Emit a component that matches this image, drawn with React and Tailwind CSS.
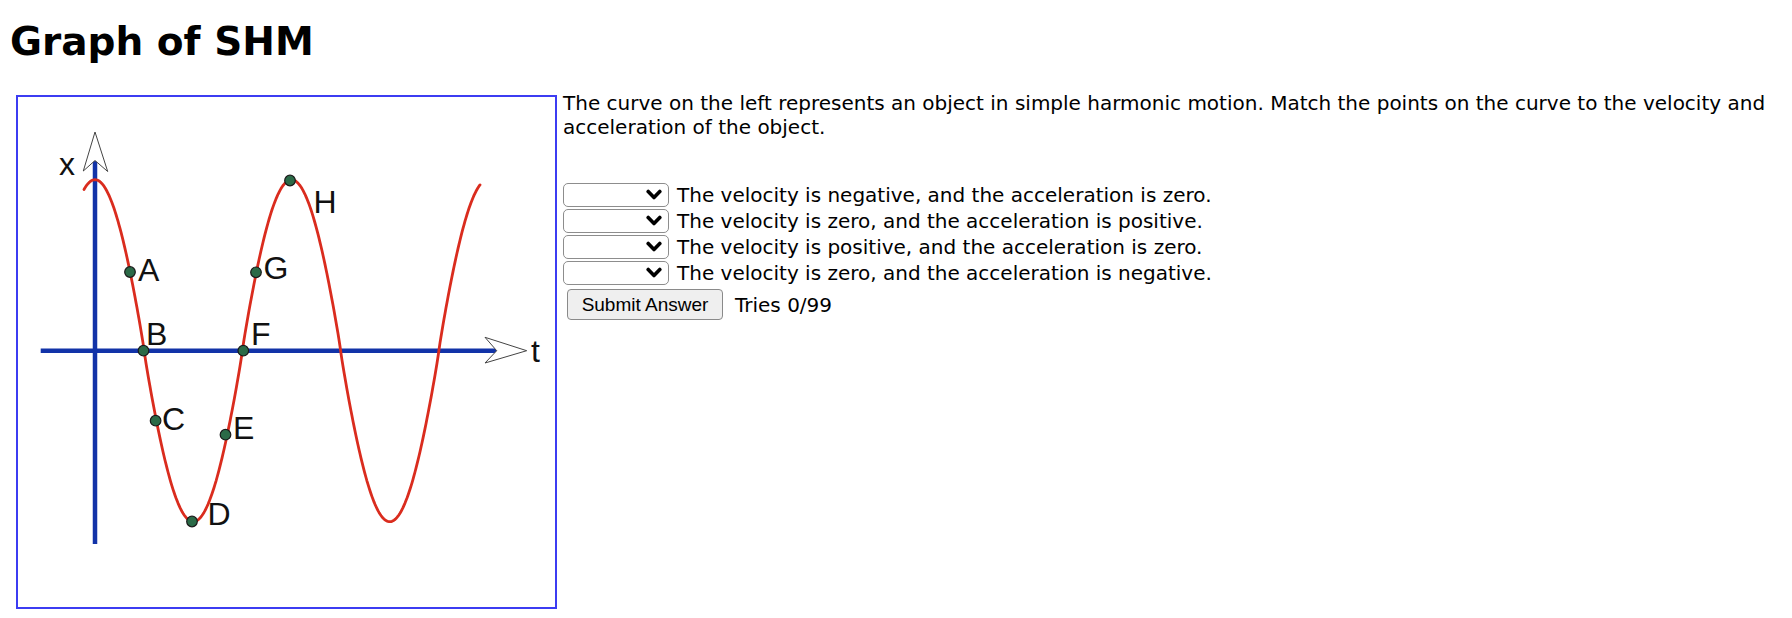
import React from "react";

// x positions are page pixels, the svg group is shifted back by the box origin
const AXIS_Y = 351.7;

function curvePath() {
  const pts = [];
  for (let x = 84; x <= 480; x += 1) {
    const c = Math.cos(((x - 95) / 196.5) * 2 * Math.PI);
    const v = Math.sign(c) * Math.pow(Math.abs(c), 0.93);
    pts.push(`${x},${(AXIS_Y - 171 * v).toFixed(1)}`);
  }
  return "M" + pts.join(" L");
}

const points = [
  { x: 130, y: 273 },
  { x: 143.5, y: 351.7 },
  { x: 155.6, y: 421.7 },
  { x: 192, y: 522.5 },
  { x: 225.5, y: 435.7 },
  { x: 243.3, y: 351.7 },
  { x: 256, y: 273.3 },
  { x: 290, y: 181.5 },
];

const labels = [
  { t: "x", x: 59, y: 176 },
  { t: "A", x: 138, y: 281.7 },
  { t: "B", x: 146, y: 346 },
  { t: "C", x: 162, y: 431 },
  { t: "D", x: 207.5, y: 526 },
  { t: "E", x: 233, y: 439.5 },
  { t: "F", x: 251, y: 346 },
  { t: "G", x: 263.5, y: 280 },
  { t: "H", x: 313.5, y: 214 },
  { t: "t", x: 531, y: 363 },
];

const statements = [
  "The velocity is negative, and the acceleration is zero.",
  "The velocity is zero, and the acceleration is positive.",
  "The velocity is positive, and the acceleration is zero.",
  "The velocity is zero, and the acceleration is negative.",
];

function Graph() {
  return (
    <div className="mt-[4px] w-[541px] h-[514px] shrink-0 border-2 border-[#3c3cf2] bg-white">
      <svg width="537" height="510" viewBox="0 0 537 510">
        <g transform="translate(-18,-98)">
          {/* axes */}
          <line x1="40.7" y1={AXIS_Y} x2="497" y2={AXIS_Y} stroke="#1233a8" strokeWidth="4.5" />
          <line x1="95" y1="162" x2="95" y2="545" stroke="#1233a8" strokeWidth="4.5" />
          <polygon points="95,133 107.7,172.5 95,161.5 83.3,172" fill="#fff" stroke="#444" strokeWidth="1" />
          <polygon points="526.7,351.7 485,364 496.7,351.7 485,338.3" fill="#fff" stroke="#444" strokeWidth="1" />

          {/* curve */}
          <path d={curvePath()} fill="none" stroke="#da2c1e" strokeWidth="2.8" strokeLinejoin="round" strokeLinecap="round" />

          {/* points */}
          {points.map((p, i) => (
            <circle key={i} cx={p.x} cy={p.y} r="5.3" fill="#2b6a47" stroke="#1a1a1a" strokeWidth="1.2" />
          ))}

          {labels.map((l) => (
            <text
              key={l.t}
              x={l.x}
              y={l.y}
              fill="#111"
              style={{ fontFamily: "'Liberation Sans', Arial, sans-serif", fontSize: "32px" }}
            >
              {l.t}
            </text>
          ))}
        </g>
      </svg>
    </div>
  );
}

function Chooser() {
  return (
    <div className="relative w-[106px] h-[24px] shrink-0">
      <select className="appearance-none w-full h-full rounded-[5px] border border-[#8d8d8d] bg-white" defaultValue="">
        <option value=""></option>
        <option value="A">A</option>
        <option value="B">B</option>
        <option value="C">C</option>
        <option value="D">D</option>
        <option value="E">E</option>
        <option value="F">F</option>
        <option value="G">G</option>
        <option value="H">H</option>
      </select>
      <svg className="absolute right-[7px] top-[6px] pointer-events-none" width="16" height="12" viewBox="0 0 16 12">
        <path d="M2.2 2.5 L8 8.5 L13.8 2.5" fill="none" stroke="#000" strokeWidth="3.6" strokeLinecap="round" strokeLinejoin="round" />
      </svg>
    </div>
  );
}

export default function App() {
  return (
    <div className="min-h-screen bg-white text-black font-['DejaVu_Sans',Verdana,sans-serif]">
      <h1 className="pt-[19px] pl-[10px] text-[39px] font-bold leading-[normal]">Graph of SHM</h1>

      <div className="mt-[27px] flex items-start pl-[16px] pr-[8px]">
        <Graph />

        <div className="ml-[6px] flex-1 text-[20px] leading-[normal]">
          <p>
            The curve on the left represents an object in simple harmonic motion. Match the points on the curve to
            the velocity and acceleration of the object.
          </p>

          <div className="mt-[43px] flex flex-col">
            {statements.map((s) => (
              <div key={s} className="flex items-center h-[26px]">
                <Chooser />
                <span className="ml-[8px] whitespace-nowrap">{s}</span>
              </div>
            ))}
          </div>

          <div className="mt-[3px] ml-[4px] flex items-center">
            <button className="w-[156px] h-[31px] rounded-[4px] border border-[#8a8a8a] bg-[#efefef] text-[19px] leading-[normal] font-['Liberation_Sans',Arial,sans-serif] text-black">
              Submit Answer
            </button>
            <span className="ml-[12px]">Tries 0/99</span>
          </div>
        </div>
      </div>
    </div>
  );
}
